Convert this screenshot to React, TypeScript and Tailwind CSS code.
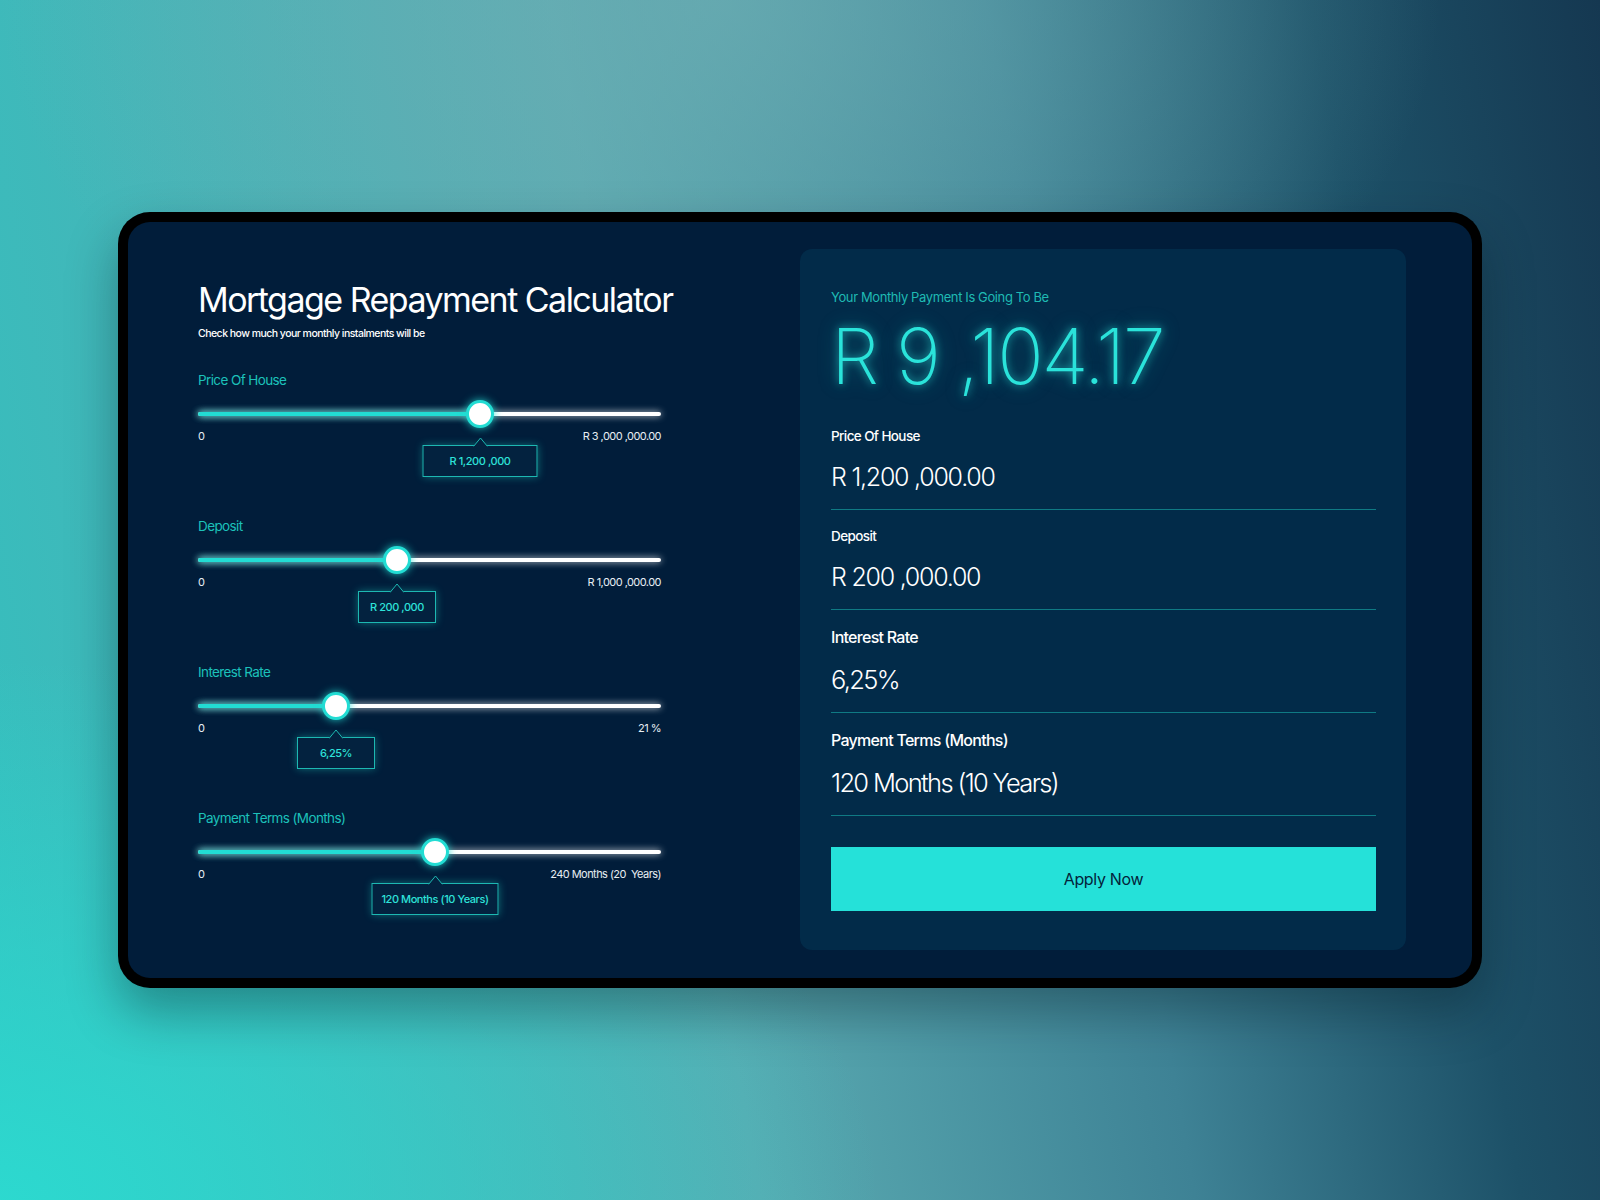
import React from "react";

type SliderProps = {
  label: string;
  pos: number;
  tip: string;
  tipW: number;
  max: string;
};

function Slider({ label, pos, tip, tipW, max }: SliderProps) {
  return (
    <div className="h-[146px]">
      <div className="text-[13.5px] leading-[20px] tracking-[-0.045em] text-[#1cc1ba]">{label}</div>
      <div className="relative mt-[10px] h-[28px] w-[463px]">
        <div className="absolute left-0 right-0 top-[12px] h-[4px] rounded-full bg-white shadow-[0_0_7px_rgba(255,255,255,0.85)]" />
        <div
          className="absolute left-0 top-[12px] h-[4px] rounded-full bg-[#22dcd3] shadow-[0_0_7px_rgba(34,220,211,0.95)]"
          style={{ width: pos }}
        />
        <div
          className="absolute top-0 -ml-[14px] h-[28px] w-[28px] rounded-full border-[3px] border-[#22dcd3] bg-white shadow-[0_0_9px_rgba(34,220,211,0.85)]"
          style={{ left: pos }}
        />
        <div
          className="absolute top-[45px] flex h-[32px] -translate-x-1/2 items-center justify-center border border-[#1db8b2] bg-[#03223f] shadow-[0_0_8px_rgba(31,200,190,0.45)]"
          style={{ left: pos, width: tipW }}
        >
          <svg
            className="absolute -top-[9px] left-1/2 -translate-x-1/2"
            width="14"
            height="10"
            viewBox="0 0 14 10"
          >
            <polygon points="0,9 7,1 14,9 14,10 0,10" fill="#03223f" />
            <polyline points="0,9.5 7,1 14,9.5" fill="none" stroke="#1db8b2" strokeWidth="1" />
          </svg>
          <span className="text-[11px] font-medium tracking-[-0.04em] text-[#2ee3da]">{tip}</span>
        </div>
      </div>
      <div className="mt-[1px] flex w-[463px] justify-between text-[11px] leading-[14px] tracking-[-0.05em] text-[#e8eef3]">
        <span>0</span>
        <span className="whitespace-pre">{max}</span>
      </div>
    </div>
  );
}

type RowProps = {
  label: string;
  value: string;
  big?: boolean;
};

function Row({ label, value, big }: RowProps) {
  return (
    <div className="flex flex-col">
      <div
        className={
          big
            ? "mt-[16px] text-[16px] font-medium leading-[22px] tracking-[-0.045em] text-white"
            : "mt-[16px] text-[13.5px] font-medium leading-[20px] tracking-[-0.045em] text-white"
        }
      >
        {label}
      </div>
      <div
        className={
          big
            ? "mt-[16px] text-[25.5px] font-light leading-[32px] tracking-[-0.065em] text-white"
            : "mt-[15px] text-[25px] font-light leading-[32px] tracking-[-0.05em] text-white"
        }
      >
        {value}
      </div>
      <div className="mt-[16px] h-px bg-[#0f7a84]" />
    </div>
  );
}

export default function App() {
  return (
    <div className="flex h-[1200px] w-full items-center justify-center bg-[image:radial-gradient(ellipse_55%_45%_at_0%_100%,rgba(44,218,208,0.95),rgba(44,218,208,0)),radial-gradient(ellipse_45%_40%_at_45%_0%,rgba(110,175,180,0.7),rgba(110,175,180,0)),linear-gradient(80deg,#34bfbe_0%,#59aab1_42%,#3e8295_66%,#1d5168_84%,#153851_100%)] font-['Inter','Noto_Sans',sans-serif]">
      <div className="h-[776px] w-[1364px] rounded-[32px] bg-black p-[10px] shadow-[0_24px_50px_rgba(0,20,30,0.35)]">
        <div className="flex h-full w-full rounded-[22px] bg-[#011d3a]">
          <div className="w-[672px] pl-[70px] pt-[58px]">
            <h1 className="text-[34px] font-normal leading-[40px] tracking-[-0.045em] text-white">
              Mortgage Repayment Calculator
            </h1>
            <p className="mt-[7px] text-[10.5px] font-medium leading-[14px] tracking-[-0.05em] text-white">
              Check how much your monthly instalments will be
            </p>
            <div className="mt-[29px]">
              <Slider label="Price Of House" pos={282} tip="R 1,200 ,000" tipW={115} max="R 3 ,000 ,000.00" />
              <Slider label="Deposit" pos={199} tip="R 200 ,000" tipW={78} max="R 1,000 ,000.00" />
              <Slider label="Interest Rate" pos={138} tip="6,25%" tipW={78} max="21 %" />
              <Slider label="Payment Terms (Months)" pos={237} tip="120 Months (10 Years)" tipW={127} max="240 Months (20  Years)" />
            </div>
          </div>
          <div className="mt-[27px] flex h-[701px] w-[606px] flex-col rounded-[12px] bg-[#022b49] pl-[31px] pr-[30px] pt-[40px]">
            <div className="text-[13px] leading-[16px] tracking-[-0.03em] text-[#1fbab3]">
              Your Monthly Payment Is Going To Be
            </div>
            <div className="mt-[13px] text-[77px] font-extralight leading-[77px] tracking-[-0.03em] text-[#2ae3da] [text-shadow:0_0_8px_rgba(42,227,218,0.7),0_0_20px_rgba(42,227,218,0.35)]">
              R 9 ,104.17
            </div>
            <div className="mt-[15px] flex flex-col">
              <Row label="Price Of House" value="R 1,200 ,000.00" />
              <Row label="Deposit" value="R 200 ,000.00" />
              <Row label="Interest Rate" value="6,25%" big />
              <Row label="Payment Terms (Months)" value="120 Months (10 Years)" big />
            </div>
            <button className="mt-[31px] flex h-[64px] w-full shrink-0 items-center justify-center bg-[#25e1d9] text-[16px] tracking-[-0.02em] text-[#04233a]">
              Apply Now
            </button>
          </div>
        </div>
      </div>
    </div>
  );
}
